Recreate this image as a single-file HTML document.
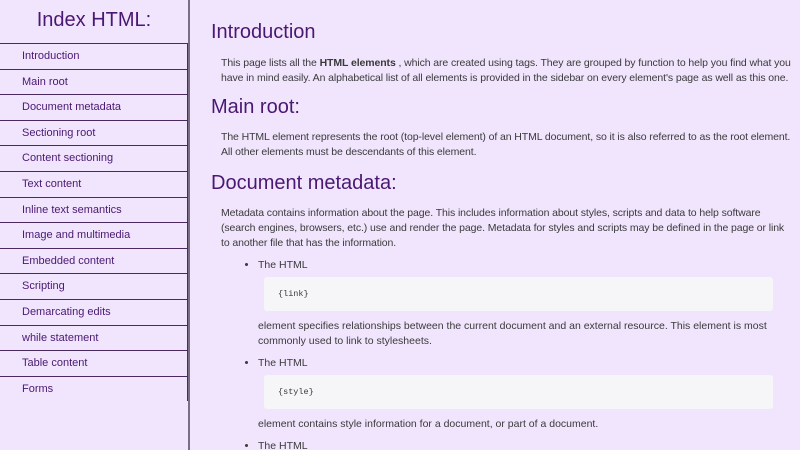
<!DOCTYPE html>
<html><head><style>
*{margin:0;padding:0;box-sizing:border-box}
html,body{width:800px;height:450px;overflow:hidden}
body{background:#f1e5fd;font-family:"Liberation Sans",sans-serif;color:#3a3a3a;position:relative}
.side{position:absolute;left:0;top:0;width:190px;height:450px;border-right:2px solid #7a6d86}
.side h2{font-weight:normal;color:#4a1872;font-size:20px;text-align:center;margin-top:9px;height:34px}
.side ul{list-style:none;border-right:1px solid #4a2a5e}
.side li{height:25.6px;border-top:1px solid #4a2a5e;padding-left:22px;font-size:11px;line-height:25px;color:#4a1872}
.main{position:absolute;left:211px;top:0;width:580px}
h1{font-weight:normal;color:#4a1872;font-size:20px}
p{font-size:10.5px;line-height:15px;margin-left:10px;letter-spacing:-0.1px}
ul.l{margin-left:30px;font-size:10.5px}
ul.l li{margin-left:17px;line-height:15px}
pre{background:#f6f5f7;font-family:"Liberation Mono",monospace;font-size:8.5px;padding:10px 14px;margin:4px 18px 8px 6px;border-radius:3px;height:34px;line-height:14px}
</style></head><body>
<div class="side"><h2>Index HTML:</h2><ul>
<li>Introduction</li><li>Main root</li><li>Document metadata</li><li>Sectioning root</li><li>Content sectioning</li><li>Text content</li><li>Inline text semantics</li><li>Image and multimedia</li><li>Embedded content</li><li>Scripting</li><li>Demarcating edits</li><li>while statement</li><li>Table content</li><li>Forms</li></ul></div>
<div class="main">
<h1 style="margin-top:21px">Introduction</h1>
<p style="margin-top:12px">This page lists all the <b>HTML elements</b> , which are created using tags. They are grouped by function to help you find what you have in mind easily. An alphabetical list of all elements is provided in the sidebar on every element's page as well as this one.</p>
<h1 style="margin-top:10px">Main root:</h1>
<p style="margin-top:11px">The HTML element represents the root (top-level element) of an HTML document, so it is also referred to as the root element. All other elements must be descendants of this element.</p>
<h1 style="margin-top:12px">Document metadata:</h1>
<p style="margin-top:11px">Metadata contains information about the page. This includes information about styles, scripts and data to help software (search engines, browsers, etc.) use and render the page. Metadata for styles and scripts may be defined in the page or link to another file that has the information.</p>
<ul class="l" style="margin-top:7px">
<li>The HTML<pre>{link}</pre>element specifies relationships between the current document and an external resource. This element is most commonly used to link to stylesheets.</li>
<li style="margin-top:7px">The HTML<pre>{style}</pre>element contains style information for a document, or part of a document.</li>
<li style="margin-top:7px">The HTML</li>
</ul>
</div>
</body></html>
